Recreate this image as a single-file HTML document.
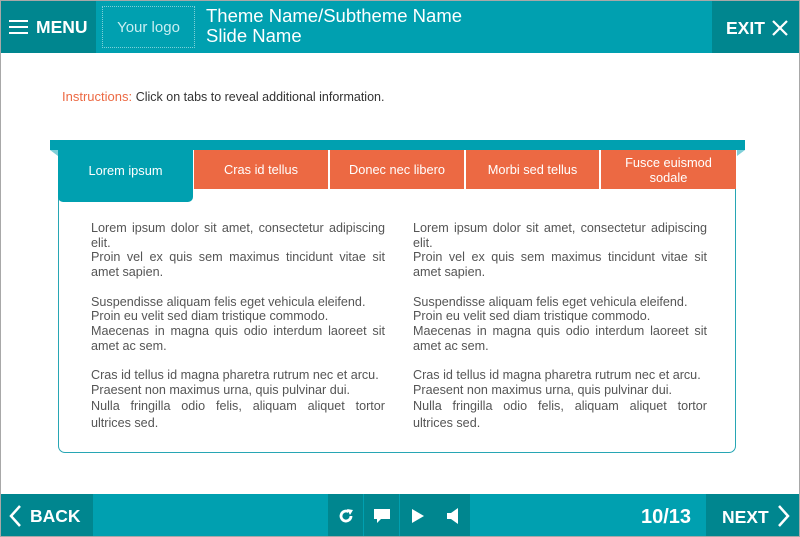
<!DOCTYPE html>
<html><head><style>
*{margin:0;padding:0;box-sizing:border-box}
body{width:800px;height:537px;overflow:hidden;background:#fff;font-family:"Liberation Sans",sans-serif;position:relative}
.frame{position:absolute;inset:0;border:1px solid #a8a8a8;pointer-events:none;z-index:9}
.hdr{position:absolute;left:0;top:0;width:800px;height:53px;background:#00a0b0}
.dk{position:absolute;background:#00868f}
.w{color:#fff;position:absolute;font-weight:bold}
.tab{position:absolute;top:150px;height:39px;background:#ec6943;color:#fff;font-size:12.8px;display:flex;align-items:center;justify-content:center;text-align:center;line-height:15px}
.col{position:absolute;top:221px;width:294px;font-size:12.6px;line-height:14.7px;color:#555;text-align:justify}
.col p{margin-bottom:14.7px}
.col .l{line-height:17px;display:block;margin-top:1px;text-align-last:justify}
.ftr{position:absolute;left:0;top:494px;width:800px;height:43px;background:#00a0b0}
.ib{position:absolute;top:494px;height:43px;width:35px;background:#00868f;display:flex;align-items:center;justify-content:center}
</style></head><body>
<div class="hdr"></div>
<div class="dk" style="left:0;top:0;width:96px;height:53px"></div>
<svg style="position:absolute;left:9px;top:20px" width="20" height="14"><g stroke="#fff" stroke-width="2"><line x1="0" y1="1" x2="19" y2="1"/><line x1="0" y1="7" x2="19" y2="7"/><line x1="0" y1="13" x2="19" y2="13"/></g></svg>
<div class="w" style="left:36px;top:17px;font-size:17.5px">MENU</div>
<div style="position:absolute;left:102px;top:6px;width:93px;height:42px;border:1px dotted #7fd0d8;color:#c8eef2;font-size:15px;display:flex;align-items:center;justify-content:center">Your logo</div>
<div style="position:absolute;left:206px;top:6px;color:#fff;font-size:18.5px;line-height:20px">Theme Name/Subtheme Name<br>Slide Name</div>
<div class="dk" style="left:712px;top:0;width:88px;height:53px"></div>
<div class="w" style="left:726px;top:18px;font-size:17.5px">EXIT</div>
<svg style="position:absolute;left:772px;top:20px" width="16" height="16"><g stroke="#fff" stroke-width="2.2"><line x1="1" y1="1" x2="15" y2="15"/><line x1="15" y1="1" x2="1" y2="15"/></g></svg>

<div style="position:absolute;left:62px;top:89px;font-size:13px;color:#333"><span style="color:#ec6943">Instructions:</span> <span style="font-size:12.5px">Click on tabs to reveal additional information.</span></div>

<div style="position:absolute;left:50px;top:140px;width:695px;height:10px;background:#00a0b0"></div>
<div style="position:absolute;left:50px;top:150px;width:0;height:0;border-top:6px solid #7fcfd8;border-left:8px solid transparent"></div>
<div style="position:absolute;left:737px;top:150px;width:0;height:0;border-top:6px solid #7fcfd8;border-right:8px solid transparent"></div>
<div style="position:absolute;left:58px;top:150px;width:678px;height:303px;border:1px solid #27a6b4;border-top:none;border-radius:0 0 7px 7px"></div>
<div class="tab" style="left:58px;width:135px;height:52px;background:#00a0b0;border-radius:0 0 5px 5px;padding-bottom:12px">Lorem ipsum</div>
<div class="tab" style="left:194px;width:134px">Cras id tellus</div>
<div class="tab" style="left:330px;width:134px">Donec nec libero</div>
<div class="tab" style="left:466px;width:133px">Morbi sed tellus</div>
<div class="tab" style="left:601px;width:135px">Fusce euismod<br>sodale</div>

<div class="col" style="left:91px"><p>Lorem ipsum dolor sit amet, consectetur adipiscing elit.<br>Proin vel ex quis sem maximus tincidunt vitae sit amet sapien.</p><p>Suspendisse aliquam felis eget vehicula eleifend.<br>Proin eu velit sed diam tristique commodo.<br>Maecenas in magna quis odio interdum laoreet sit amet ac sem.</p><p>Cras id tellus id magna pharetra rutrum nec et arcu.<br>Praesent non maximus urna, quis pulvinar dui.<span class="l">Nulla fringilla odio felis, aliquam aliquet tortor</span><span style="line-height:17px;display:block">ultrices sed.</span></p></div>
<div class="col" style="left:413px"><p>Lorem ipsum dolor sit amet, consectetur adipiscing elit.<br>Proin vel ex quis sem maximus tincidunt vitae sit amet sapien.</p><p>Suspendisse aliquam felis eget vehicula eleifend.<br>Proin eu velit sed diam tristique commodo.<br>Maecenas in magna quis odio interdum laoreet sit amet ac sem.</p><p>Cras id tellus id magna pharetra rutrum nec et arcu.<br>Praesent non maximus urna, quis pulvinar dui.<span class="l">Nulla fringilla odio felis, aliquam aliquet tortor</span><span style="line-height:17px;display:block">ultrices sed.</span></p></div>

<div class="ftr"></div>
<div class="dk" style="left:0;top:494px;width:93px;height:43px"></div>
<svg style="position:absolute;left:9px;top:504px" width="14" height="24"><polyline points="11,2 2,12 11,22" fill="none" stroke="#fff" stroke-width="2.5"/></svg>
<div class="w" style="left:30px;top:506px;font-size:17.5px">BACK</div>
<div class="ib" style="left:328px"><svg width="16" height="16" viewBox="0 0 16 16"><path d="M13 8A5 5 0 1 1 10.5 3.7" fill="none" stroke="#fff" stroke-width="2.8"/><polygon points="9,1 15,2 12,7" fill="#fff"/></svg></div>
<div class="ib" style="left:364px"><svg width="18" height="16" viewBox="0 0 18 16"><path d="M1 1H17V11H8L4 15V11H1Z" fill="#fff"/></svg></div>
<div class="ib" style="left:400px"><svg width="14" height="16"><polygon points="1,1 13,8 1,15" fill="#fff"/></svg></div>
<div class="ib" style="left:435px"><svg width="14" height="18"><polygon points="1,6 5,6 12,1 12,17 5,12 1,12" fill="#fff"/></svg></div>
<div class="w" style="left:641px;top:506px;font-size:20px">10/13</div>
<div class="dk" style="left:706px;top:494px;width:94px;height:43px"></div>
<div class="w" style="left:722px;top:507px;font-size:17.5px">NEXT</div>
<svg style="position:absolute;left:776px;top:504px" width="14" height="24"><polyline points="3,2 12,12 3,22" fill="none" stroke="#fff" stroke-width="2.5"/></svg>
<div class="frame"></div>
</body></html>
